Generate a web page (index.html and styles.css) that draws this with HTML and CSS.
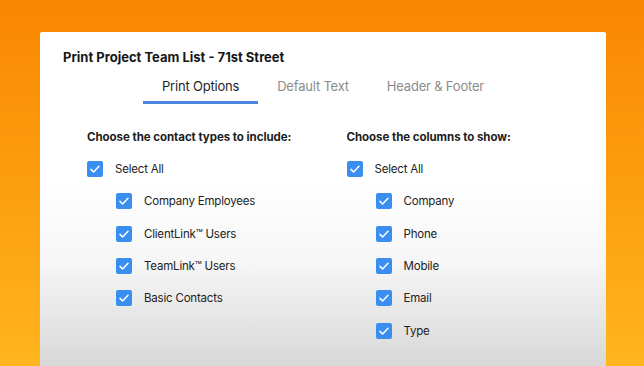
FILE: index.html
```html
<!DOCTYPE html>
<html lang="en">
<head>
    <meta charset="UTF-8">
    <meta name="viewport" content="width=device-width, initial-scale=1.0">
    <title>Print Project Team List</title>
    <link rel="stylesheet" href="styles.css">
</head>
<body>

    <div class="dialog">
        <h1>Print Project Team List - 71st Street</h1>

        <div class="tabs">
            <div class="tab active">Print Options</div>
            <div class="tab">Default Text</div>
            <div class="tab">Header &amp; Footer</div>
        </div>

        <div class="columns">
            <div class="column">
                <h2>Choose the contact types to include:</h2>
                <label class="option"><span class="box"></span>Select All</label>
                <label class="option sub"><span class="box"></span>Company Employees</label>
                <label class="option sub"><span class="box"></span>ClientLink™ Users</label>
                <label class="option sub"><span class="box"></span>TeamLink™ Users</label>
                <label class="option sub"><span class="box"></span>Basic Contacts</label>
            </div>
            <div class="column">
                <h2>Choose the columns to show:</h2>
                <label class="option"><span class="box"></span>Select All</label>
                <label class="option sub"><span class="box"></span>Company</label>
                <label class="option sub"><span class="box"></span>Phone</label>
                <label class="option sub"><span class="box"></span>Mobile</label>
                <label class="option sub"><span class="box"></span>Email</label>
                <label class="option sub"><span class="box"></span>Type</label>
            </div>
        </div>
    </div>

</body>
</html>
```

FILE: styles.css
```css
body {
    font-family: Inter, "Noto Sans", sans-serif;
    margin: 0;
    height: 366px;
    overflow: hidden;
    background: linear-gradient(#f98700, #ffb51d);
}
.dialog {
    margin: 32px 0 0 40px;
    width: 566px;
    height: 334px;
    box-sizing: border-box;
    padding: 15px 0 0 23px;
    border-radius: 2px 2px 0 0;
    background: linear-gradient(#fff 0, #fff 150px, #f6f6f6 230px, #d8d8d8 334px);
}
h1 {
    margin: 0;
    font-size: 13px;
    line-height: 20px;
    font-weight: 700;
    color: #161616;
}
.tabs {
    display: flex;
    margin: 9px 0 0 80px;
}
.tab {
    padding: 0 19px 5px;
    font-size: 13px;
    letter-spacing: -0.2px;
    line-height: 20px;
    color: #8c8c8c;
    border-bottom: 3px solid transparent;
}
.tab.active {
    color: #1f1f1f;
    border-bottom-color: #4a86e0;
}
.columns {
    display: flex;
    margin: 23px 0 0 24px;
}
.column {
    width: 260px;
}
h2 {
    margin: 0 0 6px;
    font-size: 11.5px;
    letter-spacing: -0.05px;
    line-height: 20px;
    font-weight: 700;
    color: #1c1c1c;
}
.option {
    display: flex;
    align-items: center;
    height: 32.3px;
    font-size: 11.5px;
    letter-spacing: -0.2px;
    color: #222;
}
.option.sub {
    padding-left: 29px;
}
.box {
    flex: none;
    width: 16px;
    height: 16px;
    margin-right: 12px;
    border-radius: 2px;
    background: #3a8ef0 url("data:image/svg+xml,%3Csvg xmlns='http://www.w3.org/2000/svg' viewBox='0 0 16 16'%3E%3Cpath d='M4 8.4l2.6 2.6L12 5.2' fill='none' stroke='%23fff' stroke-width='1.5' stroke-linecap='round' stroke-linejoin='round'/%3E%3C/svg%3E") no-repeat center;
}
```
